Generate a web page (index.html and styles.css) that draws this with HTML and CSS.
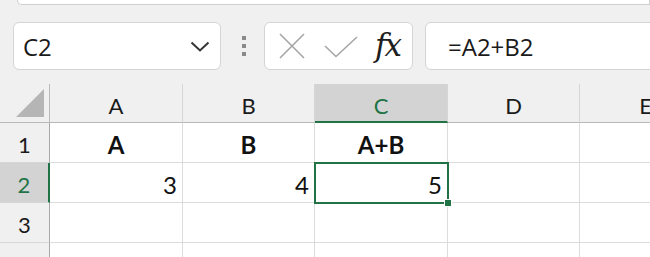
FILE: index.html
```html
<!DOCTYPE html>
<html lang="en">
<head>
    <meta charset="UTF-8">
    <meta name="viewport" content="width=device-width, initial-scale=1.0">
    <title>Sheet1</title>
    <link rel="stylesheet" href="styles.css">
</head>
<body>

    <!-- ribbon bottom edge -->
    <div class="ribbon"></div>

    <!-- Formula bar -->
    <div class="formula-bar">
        <div class="name-box">
            <span>C2</span>
            <svg class="chevron" width="20" height="12" viewBox="0 0 20 12">
                <path d="M1.5 1.5 L10 9.5 L18.5 1.5" fill="none" stroke="#333" stroke-width="2"/>
            </svg>
        </div>
        <div class="grip"><i></i><i></i><i></i></div>
        <div class="fx-box">
            <svg width="26" height="26" viewBox="0 0 26 26">
                <path d="M1 1 L25 25 M25 1 L1 25" fill="none" stroke="#a6a6a6" stroke-width="1.6"/>
            </svg>
            <svg width="34" height="22" viewBox="0 0 34 22">
                <path d="M1 10 L12 20.5 L33 1" fill="none" stroke="#a6a6a6" stroke-width="1.6"/>
            </svg>
            <span class="fx">fx</span>
        </div>
        <div class="formula">=A2+B2</div>
    </div>

    <!-- Grid -->
    <div class="sheet">
        <div class="corner"><div class="tri"></div></div>
        <div class="col-head">A</div>
        <div class="col-head">B</div>
        <div class="col-head active">C</div>
        <div class="col-head">D</div>
        <div class="col-head">E</div>

        <div class="row-head">1</div>
        <div class="cell bold center">A</div>
        <div class="cell bold center">B</div>
        <div class="cell bold center">A+B</div>
        <div class="cell"></div>
        <div class="cell"></div>

        <div class="row-head active">2</div>
        <div class="cell num">3</div>
        <div class="cell num">4</div>
        <div class="cell num selected">5</div>
        <div class="cell"></div>
        <div class="cell"></div>

        <div class="row-head">3</div>
        <div class="cell"></div>
        <div class="cell"></div>
        <div class="cell"></div>
        <div class="cell"></div>
        <div class="cell"></div>

        <div class="row-head">4</div>
        <div class="cell"></div>
        <div class="cell"></div>
        <div class="cell"></div>
        <div class="cell"></div>
        <div class="cell"></div>
    </div>

</body>
</html>
```

FILE: styles.css
```css
body {
    margin: 0;
    height: 257px;
    overflow: hidden;
    background-color: #f0f0f0;
    font-family: Lato, "Liberation Sans", sans-serif;
    color: #1a1a1a;
}
.ribbon {
    height: 4px;
    margin-left: 17px;
    background: #fff;
    border: 1px solid #cfcfcf;
    border-top: none;
    border-bottom-left-radius: 7px;
}
/* Formula bar */
.formula-bar {
    display: flex;
    align-items: center;
    height: 48px;
    margin-top: 17px;
    padding-left: 13px;
}
.name-box,
.fx-box,
.formula {
    box-sizing: border-box;
    height: 48px;
    background: #fff;
    border: 1px solid #d4d4d4;
    border-radius: 6px;
    display: flex;
    align-items: center;
}
.name-box {
    width: 208px;
    padding: 0 10px 0 9px;
    justify-content: space-between;
    font-family: "Open Sans", sans-serif;
    font-size: 24px;
}
.chevron {
    margin-top: 2px;
}
.grip {
    display: flex;
    flex-direction: column;
    gap: 4px;
    margin: 0 18px 0 21px;
}
.grip i {
    display: block;
    width: 4px;
    height: 4px;
    background: #8a8a8a;
}
.fx-box {
    width: 149px;
    padding: 0 0 0 14px;
}
.fx-box svg:nth-child(2) {
    margin: 2px 0 0 19px;
}
.fx {
    margin: -2px 0 0 17px;
    font-family: "DejaVu Serif", serif;
    font-style: italic;
    font-size: 31px;
    color: #1e1e1e;
    letter-spacing: -2px;
}
.formula {
    flex: 1;
    margin: 0 -20px 0 12px;
    padding-left: 22px;
    font-family: "Open Sans", sans-serif;
    font-size: 24px;
}
/* Sheet grid */
.sheet {
    display: grid;
    grid-template-columns: 50px 133px 132px 133px 132px 132px;
    grid-template-rows: 39px 40px 40px 40px 40px;
    width: max-content;
    margin-top: 14px;
}
.corner {
    position: relative;
    border-right: 1px solid #b8b8b8;
    border-bottom: 1px solid #b8b8b8;
}
.tri {
    position: absolute;
    right: 5px;
    bottom: 5px;
    width: 28px;
    height: 28px;
    background: #b5b5b5;
    clip-path: polygon(100% 0, 100% 100%, 0 100%);
}
.col-head {
    box-sizing: border-box;
    display: flex;
    justify-content: center;
    align-items: center;
    padding-top: 5px;
    font-size: 22px;
    border-right: 1px solid #d6d6d6;
    border-bottom: 1px solid #b8b8b8;
}
.col-head.active {
    background: #d3d3d3;
    color: #217346;
    border-bottom: 2px solid #217346;
}
.row-head {
    box-sizing: border-box;
    display: flex;
    justify-content: center;
    align-items: center;
    padding-top: 3px;
    font-size: 22px;
    border-right: 1px solid #a8a8a8;
    border-bottom: 1px solid #d6d6d6;
}
.row-head.active {
    background: #d3d3d3;
    color: #217346;
    border-right: 2px solid #217346;
}
.cell {
    box-sizing: border-box;
    display: flex;
    align-items: flex-end;
    padding: 0 5px 3px;
    background: #fff;
    font-size: 24px;
    color: #111;
    border-right: 1px solid #dcdcdc;
    border-bottom: 1px solid #dcdcdc;
}
.cell.bold {
    font-weight: bold;
}
.cell.center {
    justify-content: center;
}
.cell.num {
    justify-content: flex-end;
}
.cell.selected {
    position: relative;
    outline: 2px solid #217346;
    outline-offset: -1px;
}
.cell.selected::after {
    content: "";
    position: absolute;
    right: -5px;
    bottom: -5px;
    width: 6px;
    height: 6px;
    background: #217346;
    border: 1px solid #fff;
}
```
